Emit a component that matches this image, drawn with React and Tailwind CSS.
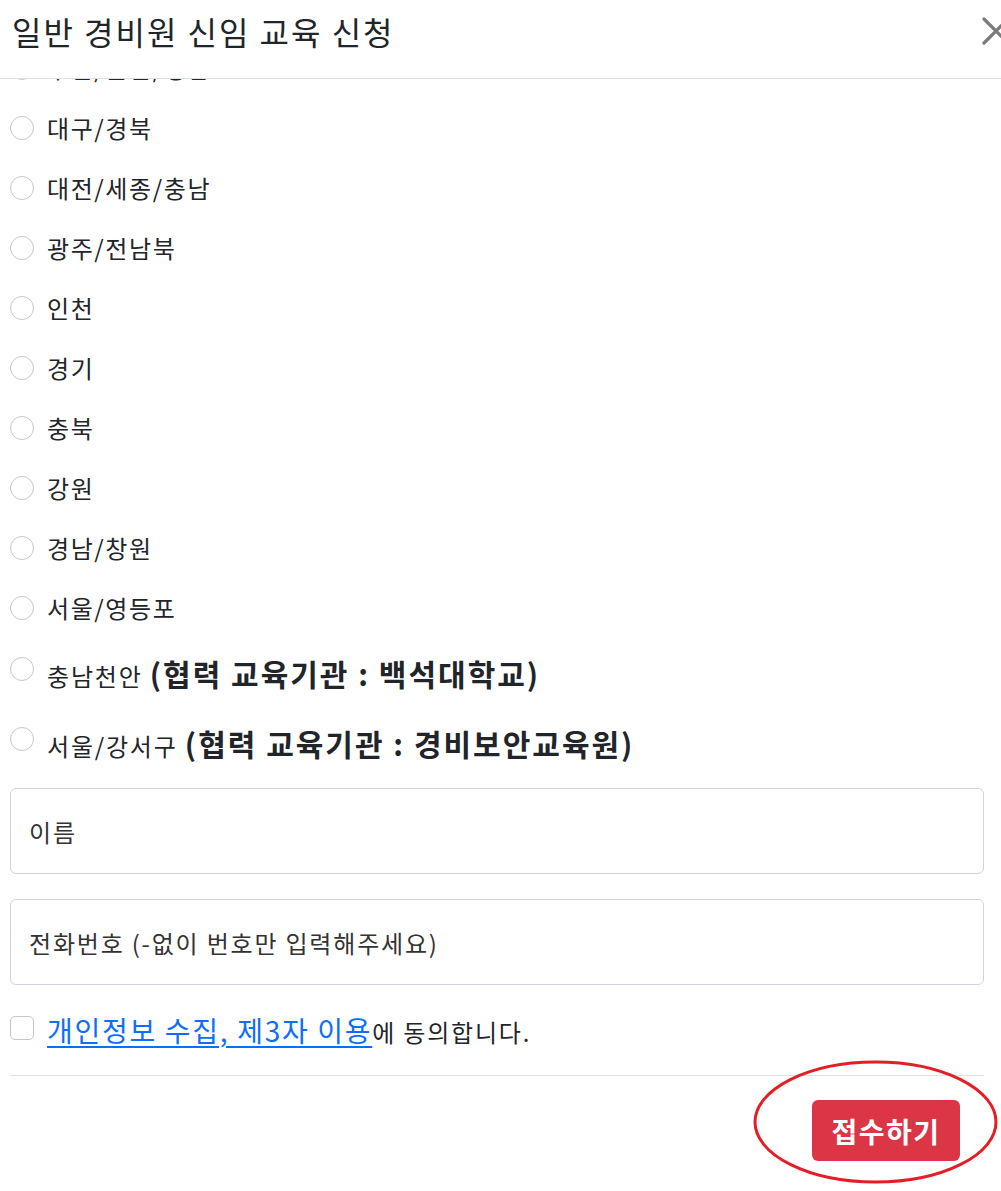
import React from "react";

function Radio({ label, first }) {
  return (
    <div className={"flex items-start h-[36px] mb-[24px]" + (first ? " mt-[-29px]" : "")}>
      <span className="w-[24px] h-[24px] mt-[6px] rounded-full border border-[#c6c6c6] bg-white shrink-0"></span>
      <span className="ml-[13px] leading-[36px] text-[24px] tracking-[1.6px] whitespace-nowrap">{label}</span>
    </div>
  );
}

function BoldRadio({ label, bold, last }) {
  return (
    <div className={"flex items-start h-[46px] " + (last ? "mb-[22px]" : "mb-[24px]")}>
      <span className="w-[24px] h-[24px] mt-[7px] rounded-full border border-[#c6c6c6] bg-white shrink-0"></span>
      <span className="ml-[13px] leading-[46px] text-[24px] tracking-[1.8px] whitespace-nowrap">
        {label} <span className="text-[30px] font-bold tracking-[2px]">{bold}</span>
      </span>
    </div>
  );
}

export default function App() {
  const regions = [
    "대구/경북",
    "대전/세종/충남",
    "광주/전남북",
    "인천",
    "경기",
    "충북",
    "강원",
    "경남/창원",
    "서울/영등포",
  ];
  return (
    <div className="relative w-[1001px] h-[1191px] overflow-hidden bg-white text-[#212529] font-['Noto_Sans_CJK_KR','Noto_Sans',sans-serif]">
      <div className="relative z-10 flex items-start h-[79px] border-b border-[#dee2e6] bg-white pl-[12px]">
        <h5 className="mt-[12px] text-[32px] leading-[38px] font-normal tracking-[2px] whitespace-nowrap">일반 경비원 신임 교육 신청</h5>
        <button className="ml-auto mt-[17px] mr-[-9px] w-[28px] h-[28px] shrink-0">
          <svg width="28" height="28" viewBox="0 0 28 28">
            <path d="M2 2 L26 26 M26 2 L2 26" stroke="#7b7b7b" strokeWidth="3.2" strokeLinecap="round" fill="none" />
          </svg>
        </button>
      </div>
      <div className="pl-[10px] pr-[17px]">
        <Radio label="부산/울산/경남" first />
        {regions.map((r) => (
          <Radio key={r} label={r} />
        ))}
        <BoldRadio label="충남천안" bold="(협력 교육기관 : 백석대학교)" />
        <BoldRadio label="서울/강서구" bold="(협력 교육기관 : 경비보안교육원)" last />
        <input
          className="block w-full h-[86px] rounded-[6px] border border-[#ced4da] px-[18px] text-[24px] tracking-[1.8px] outline-none placeholder:text-[#333] font-['Noto_Sans_CJK_KR','Noto_Sans',sans-serif]"
          placeholder="이름"
        />
        <input
          className="block w-full h-[86px] mt-[25px] rounded-[6px] border border-[#ced4da] px-[18px] text-[24px] tracking-[1.8px] outline-none placeholder:text-[#333] font-['Noto_Sans_CJK_KR','Noto_Sans',sans-serif]"
          placeholder="전화번호 (-없이 번호만 입력해주세요)"
        />
        <div className="flex items-start h-[40px] mt-[25px]">
          <span className="w-[24px] h-[24px] mt-[6px] rounded-[5px] border border-[#c6c6c6] bg-white shrink-0"></span>
          <span className="ml-[13px] leading-[40px] text-[24px] tracking-[1.8px] whitespace-nowrap">
            <a href="#" className="text-[28px] text-[#0d6efd] underline underline-offset-[4px] tracking-[1.7px]">개인정보 수집, 제3자 이용</a>에 동의합니다.
          </span>
        </div>
        <div className="mt-[25px] h-px bg-[#dee2e6]"></div>
        <div className="flex justify-end mt-[24px] pr-[24px]">
          <button className="w-[148px] h-[61px] rounded-[6px] bg-[#dc3545] text-white text-[28px] font-bold tracking-[1.5px] leading-none">
            접수하기
          </button>
        </div>
      </div>
      <svg className="absolute left-[753px] top-[1060px]" width="245" height="124" viewBox="0 0 245 124">
        <ellipse cx="122.5" cy="62" rx="120.5" ry="60" fill="none" stroke="#e41e26" strokeWidth="3" />
      </svg>
    </div>
  );
}
